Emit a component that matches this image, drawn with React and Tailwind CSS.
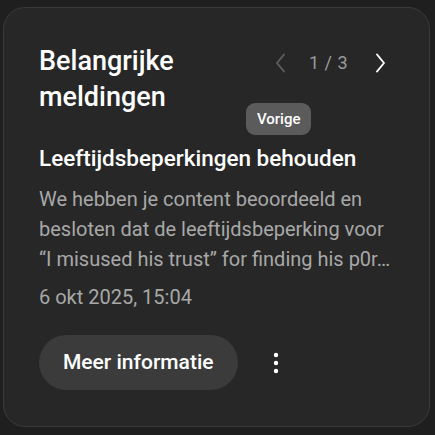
import React from "react";

export default function App() {
  return (
    <div
      className="w-[435px] h-[435px] bg-[#1f1f1f] pt-[7px] pl-[3px] pr-[5px] pb-[8px]"
      style={{ fontFamily: "Roboto, 'Noto Sans', sans-serif" }}
    >
      <div className="h-full rounded-[22px] border border-[#3a3a3a] bg-[#272727] pl-[35px] pr-[36px] pt-[35px]">
        {/* Kop met paginering */}
        <div className="flex items-start justify-between">
          <h1 className="text-[27px] leading-[36px] font-medium text-white whitespace-nowrap">
            Belangrijke
            <br />
            meldingen
          </h1>
          <div className="relative flex items-center mt-[6px]">
            <button className="w-[24px] h-[24px] flex items-center justify-center text-[#5e5e5e]">
              <svg width="24" height="24" viewBox="0 0 24 24" fill="none" stroke="currentColor" strokeWidth="1.9" strokeLinecap="round" strokeLinejoin="round">
                <path d="M16 3.5 L9 12 L16 20.5" />
              </svg>
            </button>
            <span className="ml-[17px] mr-[21px] text-[18px] text-[#9a9a9a] tracking-[0.5px]">1 / 3</span>
            <button className="w-[24px] h-[24px] flex items-center justify-center text-white">
              <svg width="24" height="24" viewBox="0 0 24 24" fill="none" stroke="currentColor" strokeWidth="1.9" strokeLinecap="round" strokeLinejoin="round">
                <path d="M8 3.5 L15 12 L8 20.5" />
              </svg>
            </button>
            {/* Tooltip */}
            <div className="absolute left-[-22px] top-[54px] rounded-[9px] bg-[#5b5b5b] px-[11px] py-[6px] text-[15px] font-medium leading-[20px] text-white">
              Vorige
            </div>
          </div>
        </div>

        <h2 className="mt-[29px] text-[22.5px] leading-[28px] font-medium text-white whitespace-nowrap">
          Leeftijdsbeperkingen behouden
        </h2>
        <p className="mt-[12px] text-[20px] leading-[30px] text-[#a8a8a8] whitespace-nowrap">
          We hebben je content beoordeeld en
          <br />
          besloten dat de leeftijdsbeperking voor
          <br />
          “I misused his trust” for finding his p0r…
        </p>
        <p className="mt-[10px] text-[20px] leading-[26px] text-[#a8a8a8]">6 okt 2025, 15:04</p>

        <div className="mt-[25px] flex items-center">
          <button className="h-[55px] rounded-full bg-[#3b3b3b] px-[24px] text-[21px] font-medium text-white">
            Meer informatie
          </button>
          <button className="ml-[26px] flex h-[24px] w-[24px] items-center justify-center text-white">
            <svg width="24" height="24" viewBox="0 0 24 24" fill="currentColor">
              <circle cx="12" cy="4" r="2.2" />
              <circle cx="12" cy="12" r="2.2" />
              <circle cx="12" cy="20" r="2.2" />
            </svg>
          </button>
        </div>
      </div>
    </div>
  );
}
